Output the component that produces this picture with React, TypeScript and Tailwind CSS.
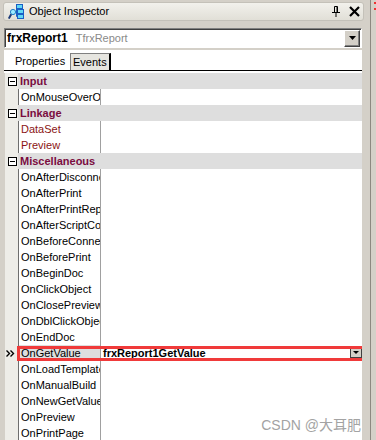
import React from 'react';

type Row =
  | { kind: 'cat'; label: string }
  | { kind: 'prop'; name: string; link?: boolean; value?: string; selected?: boolean };

const rows: Row[] = [
  { kind: 'cat', label: 'Input' },
  { kind: 'prop', name: 'OnMouseOverObject' },
  { kind: 'cat', label: 'Linkage' },
  { kind: 'prop', name: 'DataSet', link: true },
  { kind: 'prop', name: 'Preview', link: true },
  { kind: 'cat', label: 'Miscellaneous' },
  { kind: 'prop', name: 'OnAfterDisconnect' },
  { kind: 'prop', name: 'OnAfterPrint' },
  { kind: 'prop', name: 'OnAfterPrintReport' },
  { kind: 'prop', name: 'OnAfterScriptCompile' },
  { kind: 'prop', name: 'OnBeforeConnect' },
  { kind: 'prop', name: 'OnBeforePrint' },
  { kind: 'prop', name: 'OnBeginDoc' },
  { kind: 'prop', name: 'OnClickObject' },
  { kind: 'prop', name: 'OnClosePreview' },
  { kind: 'prop', name: 'OnDblClickObject' },
  { kind: 'prop', name: 'OnEndDoc' },
  { kind: 'prop', name: 'OnGetValue', value: 'frxReport1GetValue', selected: true },
  { kind: 'prop', name: 'OnLoadTemplate' },
  { kind: 'prop', name: 'OnManualBuild' },
  { kind: 'prop', name: 'OnNewGetValue' },
  { kind: 'prop', name: 'OnPreview' },
  { kind: 'prop', name: 'OnPrintPage' },
  { kind: 'prop', name: 'OnPrintReport' },
];

const InspectorIcon = () => (
  <svg width="16" height="16" viewBox="0 0 16 16">
    <rect x="8.5" y="0.5" width="6" height="4" fill="#62d8f4" stroke="#1a5fc4" />
    <rect x="9.5" y="5.5" width="6" height="4" fill="#62d8f4" stroke="#1a5fc4" />
    <rect x="9.5" y="10.5" width="6" height="4" fill="#62d8f4" stroke="#1a5fc4" />
    <path d="M8.5 4.5V12.5H9.5M8.5 7.5H9.5" fill="none" stroke="#1a5fc4" />
    <circle cx="5" cy="8" r="2.6" fill="#9cecff" stroke="#1f7fc8" />
    <path d="M3.2 10.2L0.8 14.6" stroke="#1d3a78" strokeWidth="2" />
  </svg>
);

const PinIcon = () => (
  <svg width="8" height="11" viewBox="0 0 8 11">
    <path d="M2.5 0.5H5.5V6.5H2.5Z" fill="none" stroke="#000" />
    <path d="M5 1V6.5" stroke="#000" strokeWidth="1" />
    <path d="M0 6.5H8" stroke="#000" />
    <path d="M4 7V11" stroke="#000" />
  </svg>
);

const CloseIcon = () => (
  <svg width="11" height="11" viewBox="0 0 11 11">
    <path d="M1 1L10 10M10 1L1 10" stroke="#000" strokeWidth="2.2" />
  </svg>
);

const DownArrow = ({ w = 7, h = 4 }: { w?: number; h?: number }) => (
  <svg width={w} height={h} viewBox={`0 0 ${w} ${h}`}>
    <path d={`M0 0H${w}L${w / 2} ${h}Z`} fill="#000" />
  </svg>
);

const MinusBox = () => (
  <div className="w-[9px] h-[9px] border border-black bg-white flex items-center justify-center">
    <div className="w-[5px] h-px bg-black" />
  </div>
);

const Chevrons = () => (
  <svg width="9" height="7" viewBox="0 0 9 7">
    <path d="M0.5 0.5L3.5 3.5L0.5 6.5M4.5 0.5L7.5 3.5L4.5 6.5" fill="none" stroke="#000" strokeWidth="1.4" />
  </svg>
);

const App: React.FC = () => {
  return (
    <div
      className="relative w-[376px] h-[440px] overflow-hidden bg-[#d4d0c8] flex text-[11px] text-black"
      style={{ fontFamily: '"Liberation Sans", Arial, "Noto Sans CJK SC", sans-serif' }}
    >
      {/* Inspector panel */}
      <div className="w-[364px] pl-[3px] pt-[2px] flex flex-col">
        {/* Title bar */}
        <div className="h-[19px] w-[361px] rounded-[3px] border border-[#c4c1b9] bg-gradient-to-b from-[#f2f1ec] to-[#e1dfd7] flex items-center">
          <div className="ml-[4px]">
            <InspectorIcon />
          </div>
          <span className="ml-[5px] leading-none">Object Inspector</span>
          <div className="ml-auto mr-[3px] flex items-center gap-[9px]">
            <PinIcon />
            <CloseIcon />
          </div>
        </div>

        {/* Object combo */}
        <div className="mt-[7px] ml-px w-[358px] h-[20px] border border-t-[#808080] border-l-[#808080] border-r-white border-b-white shadow-[inset_1px_1px_0_#404040] bg-white flex items-center">
          <span className="ml-[2px] font-bold text-[12px] leading-none">frxReport1</span>
          <span className="ml-[8px] text-[#8a8a8a] leading-none">TfrxReport</span>
          <div className="ml-auto mr-px w-[16px] h-[17px] bg-[#d4d0c8] border border-t-white border-l-white border-r-[#404040] border-b-[#404040] shadow-[inset_-1px_-1px_0_#808080] flex items-center justify-center">
            <DownArrow />
          </div>
        </div>

        {/* Tabs */}
        <div className="mt-[2px] ml-px w-[358px] h-[21px] bg-white border-b border-black flex items-end">
          <div className="w-[66px] h-[17px] pl-[11px] leading-[17px]">Properties</div>
          <div className="w-[41px] h-[17px] pl-[2px] leading-[16px] bg-[#e6e5e0] border-t border-l border-[#808080] border-r-2 border-r-black">
            Events
          </div>
        </div>
        <div className="ml-px w-[358px] h-[2px] bg-white" />

        {/* Grid */}
        <div className="ml-[2px] w-[357px] flex-1 bg-white flex flex-col overflow-hidden">
          {rows.map((row, i) =>
            row.kind === 'cat' ? (
              <div key={i} className="flex h-[16px] shrink-0">
                <div className="w-[13px] bg-[#eeede8] flex items-center justify-center pl-px">
                  <MinusBox />
                </div>
                <div className="flex-1 bg-[#dedede] pl-[2px] leading-[16px] font-bold text-[#7a0c3e]">
                  {row.label}
                </div>
              </div>
            ) : (
              <div key={i} className="relative flex h-[16px] shrink-0">
                <div className="w-[13px] bg-[#eeede8] flex items-center justify-start pl-px">
                  {row.selected && <Chevrons />}
                </div>
                <div
                  className={`w-[83px] border-l border-l-[#6e6e6e] border-r border-r-[#a0a0a0] pl-[2px] leading-[16px] whitespace-nowrap overflow-hidden ${
                    row.selected ? 'bg-[#dedede]' : 'bg-white'
                  } ${row.link ? 'text-[#8b1414]' : 'text-black'}`}
                >
                  {row.name}
                </div>
                <div
                  className={`flex-1 flex items-center pl-[2px] ${
                    row.selected ? 'border-b border-dotted border-[#808080]' : ''
                  }`}
                >
                  {row.value && <span className="font-bold leading-[16px]">{row.value}</span>}
                  {row.selected && (
                    <div className="ml-auto w-[12px] h-[11px] bg-[#d4d0c8] border border-[#404040] flex items-center justify-center">
                      <DownArrow w={6} h={3} />
                    </div>
                  )}
                </div>
                {row.selected && (
                  <div className="absolute top-px bottom-0 left-[12px] right-[-6px] border-[3px] border-[#f03a3a] pointer-events-none" />
                )}
              </div>
            )
          )}
        </div>
      </div>

      {/* Splitter edge */}
      <div className="ml-[6px] w-px bg-[#8c8880]" />
      <div className="flex-1 flex flex-col pt-[2px] items-end">
        <div className="w-[2px] h-[2px] bg-[#e33]" />
        <div className="mt-[4px] w-[2px] h-[2px] bg-[#e33]" />
      </div>

      {/* Watermark */}
      <div className="absolute right-[15px] bottom-[8px] text-[14px] leading-none text-[#a3a3a3]">
        CSDN @大耳肥
      </div>
    </div>
  );
};

export default App;
